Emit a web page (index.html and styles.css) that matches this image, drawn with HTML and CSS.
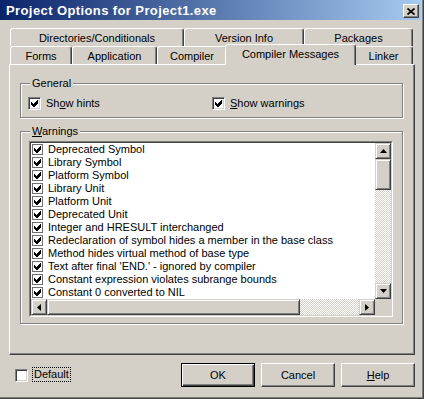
FILE: index.html
```html
<!DOCTYPE html>
<html lang="en">
<head>
  <meta charset="UTF-8">
  <title>Project Options for Project1.exe</title>
  <link rel="stylesheet" href="styles.css">
</head>
<body>
  <div class="window">
    <div class="titlebar">
      <span class="title">Project Options for Project1.exe</span>
      <span class="close">
        <svg width="8" height="7" viewBox="0 0 8 7"><path d="M0.5 0.5L7.5 6.5M7.5 0.5L0.5 6.5" stroke="#000" stroke-width="1.7"/></svg>
      </span>
    </div>

    <!-- tab strip: two rows, front row holds the active page -->
    <div class="tabs">
      <div class="tab-row">
        <div class="tab tab-dirs">Directories/Conditionals</div>
        <div class="tab tab-version">Version Info</div>
        <div class="tab tab-packages">Packages</div>
      </div>
      <div class="tab-row front">
        <div class="tab tab-forms">Forms</div>
        <div class="tab tab-app">Application</div>
        <div class="tab tab-compiler">Compiler</div>
        <div class="tab tab-messages active">Compiler Messages</div>
        <div class="tab tab-linker">Linker</div>
      </div>
    </div>

    <div class="panel">
      <div class="group general">
        <span class="group-label">General</span>
        <div class="check check-wide">
          <span class="box"><svg class="tick" width="7" height="7" viewBox="0 0 7 7"><path d="M0 2L2 4L6 0L7 0L7 3L3 7L2 7L0 5Z"/></svg></span>
          <span>Sh<u>o</u>w hints</span>
        </div>
        <div class="check">
          <span class="box"><svg class="tick" width="7" height="7" viewBox="0 0 7 7"><path d="M0 2L2 4L6 0L7 0L7 3L3 7L2 7L0 5Z"/></svg></span>
          <span><u>S</u>how warnings</span>
        </div>
      </div>

      <div class="group warnings">
        <span class="group-label"><u>W</u>arnings</span>
        <div class="checklist">
          <div class="checklist-inner">
            <div class="list-main">
              <div class="items" id="items"></div>
              <div class="vscroll">
                <div class="sb-btn"><svg width="7" height="4" viewBox="0 0 7 4"><path d="M3.5 0L7 4H0Z"/></svg></div>
                <div class="sb-thumb vthumb"></div>
                <div class="sb-track"></div>
                <div class="sb-btn"><svg width="7" height="4" viewBox="0 0 7 4"><path d="M0 0H7L3.5 4Z"/></svg></div>
              </div>
            </div>
            <div class="hrow">
              <div class="hscroll">
                <div class="sb-btn"><svg width="4" height="7" viewBox="0 0 4 7"><path d="M4 0V7L0 3.5Z"/></svg></div>
                <div class="sb-thumb hthumb"></div>
                <div class="sb-track"></div>
                <div class="sb-btn"><svg width="4" height="7" viewBox="0 0 4 7"><path d="M0 0L4 3.5L0 7Z"/></svg></div>
              </div>
              <div class="corner"></div>
            </div>
          </div>
        </div>
      </div>
    </div>

    <div class="footer">
      <span class="box default-box"></span>
      <span class="focus-label">Default</span>
      <div class="buttons">
        <button class="button default">OK</button>
        <button class="button">Cancel</button>
        <button class="button"><u>H</u>elp</button>
      </div>
    </div>
  </div>

  <script>
    // warning list entries, all checked
    const warnings = [
      'Deprecated Symbol',
      'Library Symbol',
      'Platform Symbol',
      'Library Unit',
      'Platform Unit',
      'Deprecated Unit',
      'Integer and HRESULT interchanged',
      'Redeclaration of symbol hides a member in the base class',
      'Method hides virtual method of base type',
      "Text after final 'END.' - ignored by compiler",
      'Constant expression violates subrange bounds',
      'Constant 0 converted to NIL'
    ];

    const list = document.getElementById('items');
    warnings.forEach(text => {
      const row = document.createElement('div');
      row.className = 'item';
      row.innerHTML = '<span class="item-box"><svg class="tick" width="7" height="7" viewBox="0 0 7 7">' +
        '<path d="M0 2L2 4L6 0L7 0L7 3L3 7L2 7L0 5Z"/></svg></span>';
      const label = document.createElement('span');
      label.textContent = text;
      row.appendChild(label);
      list.appendChild(row);
    });
  </script>
</body>
</html>
```

FILE: styles.css
```css
body {
  margin: 0;
  background-color: #d4d0c8;
  color: #000;
  font-family: "Liberation Sans", Arial, sans-serif;
  font-size: 11px;
}
.window {
  width: 424px;
  height: 399px;
  box-sizing: border-box;
  padding: 0 3px 3px 0;
  box-shadow: inset -1px -1px #404040, inset -2px -2px #808080;
}
.titlebar {
  height: 20px;
  display: flex;
  align-items: center;
  justify-content: space-between;
  padding: 0 2px 0 6px;
  background: linear-gradient(to right, #0a246a, #a6caf0);
}
.title {
  color: #fff;
  font-weight: bold;
  font-size: 13px;
  letter-spacing: 0.4px;
}
.close {
  width: 16px;
  height: 14px;
  margin-top: 2px;
  box-sizing: border-box;
  display: flex;
  align-items: center;
  justify-content: center;
  background-color: #d4d0c8;
  border: 1px solid;
  border-color: #fff #404040 #404040 #fff;
  box-shadow: inset -1px -1px #808080;
}

/* tabs */
.tabs {
  margin: 8px 0 0 10px;
  width: 403px;
}
.tab-row {
  display: flex;
  height: 18px;
}
.tab-row.front {
  align-items: flex-end;
}
.tab {
  box-sizing: border-box;
  height: 18px;
  padding-top: 2px;
  line-height: 15px;
  text-align: center;
  white-space: nowrap;
  border: 1px solid;
  border-bottom: 0;
  border-color: #fff #404040 transparent #fff;
  border-radius: 3px 3px 0 0;
  box-shadow: inset -1px 0 #808080;
}
.tab-dirs { width: 174px; }
.tab-version { width: 120px; }
.tab-packages { width: 109px; }
.tab-forms { width: 62px; }
.tab-app { width: 85px; }
.tab-compiler { width: 70px; }
.tab-messages { width: 127px; }
.tab-linker { width: 59px; }
.tab.active {
  position: relative;
  z-index: 1;
  width: 131px;
  height: 21px;
  margin: 0 -2px -1px;
  background-color: #d4d0c8;
}

/* page */
.panel {
  width: 406px;
  height: 291px;
  margin-left: 9px;
  box-sizing: border-box;
  padding: 18px 10px 0;
  border: 1px solid;
  border-color: #fff #404040 #404040 #fff;
  box-shadow: inset -1px -1px #808080;
}
.group {
  position: relative;
  width: 383px;
  box-sizing: border-box;
  border: 1px solid #808080;
  box-shadow: inset 1px 1px #fff, 1px 1px #fff;
}
.group-label {
  position: absolute;
  top: -7px;
  left: 9px;
  padding: 0 2px;
  line-height: 13px;
  background-color: #d4d0c8;
}
.general {
  height: 35px;
  display: flex;
  padding: 13px 0 0 7px;
}
.warnings {
  height: 193px;
  margin-top: 13px;
  padding: 9px 0 0 8px;
}
.check {
  display: flex;
  align-items: center;
  gap: 5px;
  height: 13px;
  line-height: 13px;
}
.check-wide {
  width: 184px;
}
.box {
  width: 13px;
  height: 13px;
  box-sizing: border-box;
  display: flex;
  align-items: center;
  justify-content: center;
  flex-shrink: 0;
  background-color: #fff;
  border: 1px solid;
  border-color: #808080 #fff #fff #808080;
  box-shadow: inset 1px 1px #404040, inset -1px -1px #d4d0c8;
}
.tick {
  display: block;
  shape-rendering: crispEdges;
}

/* check list box */
.checklist {
  width: 364px;
  height: 176px;
  box-sizing: border-box;
  border: 1px solid;
  border-color: #808080 #fff #fff #808080;
}
.checklist-inner {
  height: 100%;
  box-sizing: border-box;
  border: 1px solid;
  border-color: #404040 #d4d0c8 #d4d0c8 #404040;
}
.list-main {
  display: flex;
  height: 156px;
}
.items {
  width: 344px;
  overflow: hidden;
  background-color: #fff;
}
.item {
  display: flex;
  align-items: center;
  gap: 5px;
  height: 13px;
  padding-left: 1px;
  line-height: 13px;
  white-space: nowrap;
}
.item-box {
  width: 11px;
  height: 11px;
  box-sizing: border-box;
  display: flex;
  align-items: center;
  justify-content: center;
  flex-shrink: 0;
  border: 1px solid #6f6f6f;
  background-color: #fff;
}
.vscroll {
  width: 16px;
  display: flex;
  flex-direction: column;
}
.hrow {
  display: flex;
  height: 16px;
}
.hscroll {
  width: 344px;
  display: flex;
}
.corner {
  width: 16px;
  background-color: #d4d0c8;
}
.sb-btn,
.sb-thumb {
  box-sizing: border-box;
  flex-shrink: 0;
  background-color: #d4d0c8;
  border: 1px solid;
  border-color: #d4d0c8 #404040 #404040 #d4d0c8;
  box-shadow: inset 1px 1px #fff, inset -1px -1px #808080;
}
.sb-btn {
  width: 16px;
  height: 16px;
  display: flex;
  align-items: center;
  justify-content: center;
}
.vthumb {
  height: 31px;
}
.hthumb {
  width: 253px;
}
.sb-track {
  flex: 1;
  background-image: repeating-conic-gradient(#fff 0 25%, #d4d0c8 0 50%);
  background-size: 2px 2px;
}

/* bottom row */
.footer {
  display: flex;
  align-items: flex-start;
  height: 41px;
  box-sizing: border-box;
  padding: 8px 6px 0 15px;
}
.default-box {
  margin-top: 6px;
}
.focus-label {
  margin: 4px 0 0 4px;
  padding: 0 1px;
  line-height: 13px;
  border: 1px dotted #000;
}
.buttons {
  display: flex;
  gap: 6px;
  margin-left: auto;
}
.button {
  width: 74px;
  height: 24px;
  box-sizing: border-box;
  padding: 0;
  font: inherit;
  color: #000;
  background-color: #d4d0c8;
  border: 1px solid;
  border-color: #fff #404040 #404040 #fff;
  box-shadow: inset -1px -1px #808080;
}
.button.default {
  border-color: #000;
  box-shadow: inset 1px 1px #fff, inset -1px -1px #404040, inset -2px -2px #808080;
}
```
